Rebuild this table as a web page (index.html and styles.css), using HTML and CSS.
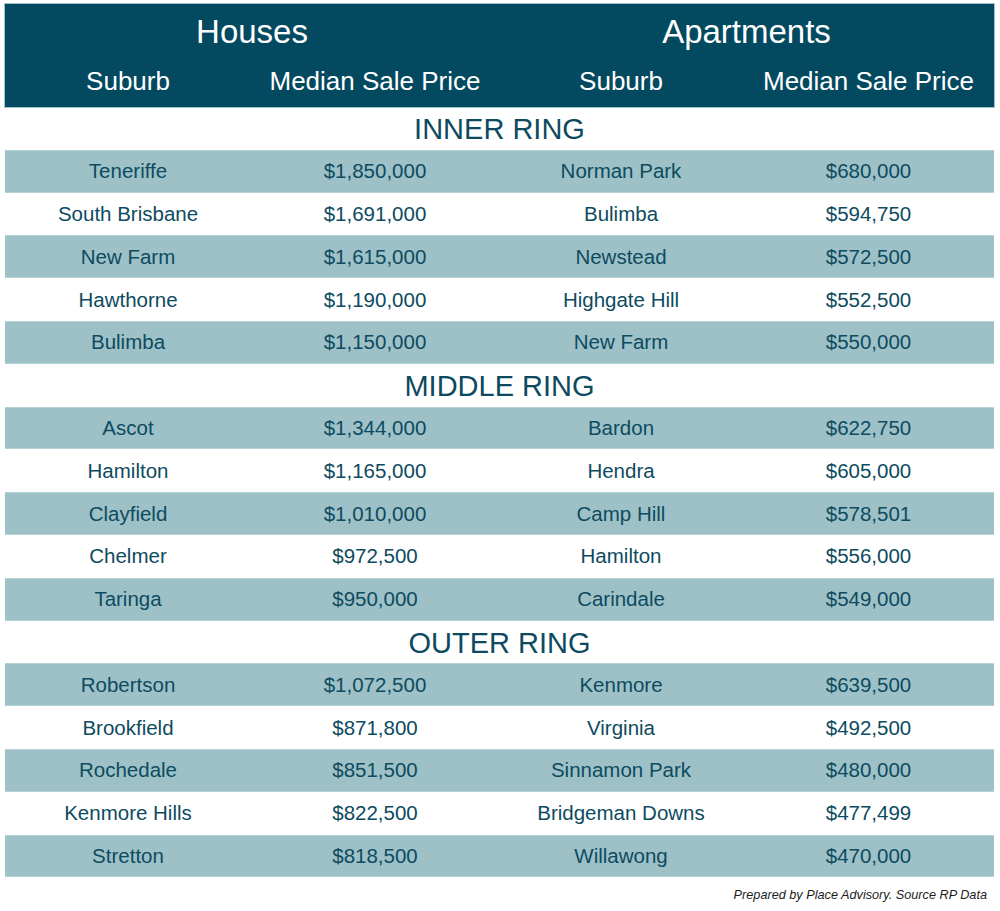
FILE: index.html
```html
<!DOCTYPE html>
<html>
<head>
<meta charset="utf-8">
<link rel="stylesheet" href="styles.css">
</head>
<body>
<div class="sheet">
  <div class="head">
    <div class="group-row">
      <div class="group">Houses</div>
      <div class="group">Apartments</div>
    </div>
    <div class="col-row">
      <div>Suburb</div><div>Median Sale Price</div><div>Suburb</div><div>Median Sale Price</div>
    </div>
  </div>

  <div class="ring">INNER RING</div>
  <div class="row alt"><div>Teneriffe</div><div>$1,850,000</div><div>Norman Park</div><div>$680,000</div></div>
  <div class="row"><div>South Brisbane</div><div>$1,691,000</div><div>Bulimba</div><div>$594,750</div></div>
  <div class="row alt"><div>New Farm</div><div>$1,615,000</div><div>Newstead</div><div>$572,500</div></div>
  <div class="row"><div>Hawthorne</div><div>$1,190,000</div><div>Highgate Hill</div><div>$552,500</div></div>
  <div class="row alt"><div>Bulimba</div><div>$1,150,000</div><div>New Farm</div><div>$550,000</div></div>

  <div class="ring">MIDDLE RING</div>
  <div class="row alt"><div>Ascot</div><div>$1,344,000</div><div>Bardon</div><div>$622,750</div></div>
  <div class="row"><div>Hamilton</div><div>$1,165,000</div><div>Hendra</div><div>$605,000</div></div>
  <div class="row alt"><div>Clayfield</div><div>$1,010,000</div><div>Camp Hill</div><div>$578,501</div></div>
  <div class="row"><div>Chelmer</div><div>$972,500</div><div>Hamilton</div><div>$556,000</div></div>
  <div class="row alt"><div>Taringa</div><div>$950,000</div><div>Carindale</div><div>$549,000</div></div>

  <div class="ring">OUTER RING</div>
  <div class="row alt"><div>Robertson</div><div>$1,072,500</div><div>Kenmore</div><div>$639,500</div></div>
  <div class="row"><div>Brookfield</div><div>$871,800</div><div>Virginia</div><div>$492,500</div></div>
  <div class="row alt"><div>Rochedale</div><div>$851,500</div><div>Sinnamon Park</div><div>$480,000</div></div>
  <div class="row"><div>Kenmore Hills</div><div>$822,500</div><div>Bridgeman Downs</div><div>$477,499</div></div>
  <div class="row alt"><div>Stretton</div><div>$818,500</div><div>Willawong</div><div>$470,000</div></div>

  <div class="note">Prepared by Place Advisory. Source RP Data</div>
</div>
</body>
</html>
```

FILE: styles.css
```css
html, body {
  margin: 0;
  padding: 0;
  background: #ffffff;
}
body {
  font-family: "Liberation Sans", Arial, sans-serif;
  color: #0c4a5f;
}
.sheet {
  width: 989px;
  margin: 4px 0 0 5px;
}
.head {
  background: #03495f;
  color: #ffffff;
  height: 103px;
  display: flex;
  flex-direction: column;
  box-shadow: 0 0 0 1px #9fc3c8;
}
.group-row {
  display: grid;
  grid-template-columns: 494px 495px;
  height: 55px;
  align-items: center;
}
.group {
  text-align: center;
  font-size: 33px;
  padding-top: 1px;
}
.col-row,
.row {
  display: grid;
  grid-template-columns: 246px 248px 244px 251px;
  text-align: center;
}
.col-row {
  height: 48px;
  align-items: start;
  font-size: 26px;
}
.col-row div {
  padding-top: 7px;
}
.ring {
  height: 42.8px;
  display: flex;
  align-items: center;
  justify-content: center;
  font-size: 29px;
  color: #0d4a5f;
  padding-top: 3px;
  box-sizing: border-box;
}
.row {
  height: 42.8px;
  align-items: center;
  font-size: 20.5px;
  color: #0d4b60;
}
.row.alt {
  background: #9dc1c7;
  box-shadow: inset 0 1px 0 #b5d2d6, inset 0 -1px 0 #b5d2d6;
}
.note {
  text-align: right;
  font-style: italic;
  font-size: 12.7px;
  color: #1c1c1c;
  padding: 11px 7px 0 0;
}
```
